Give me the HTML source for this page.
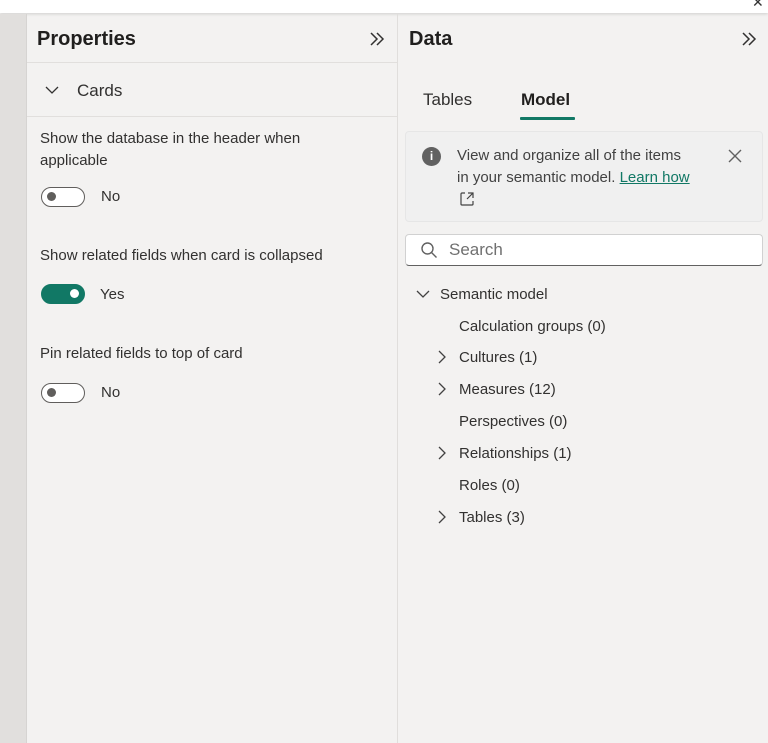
<!DOCTYPE html>
<html><head><style>
*{margin:0;padding:0;box-sizing:border-box}
body{width:768px;height:743px;overflow:hidden;background:#f3f2f1;font-family:"Liberation Sans",sans-serif;color:#252423;position:relative}
.a{position:absolute;white-space:nowrap}
.t{font-size:15px;color:#323130}
.tog{position:absolute;width:44px;height:20px;border-radius:10px;border:1.5px solid #605e5c;background:#fff}
.tog i{position:absolute;top:4px;left:5px;width:9px;height:9px;border-radius:50%;background:#605e5c}
.tog.on{background:#117865;border-color:#117865}
.tog.on i{left:auto;right:5px;background:#fff}
.tree{font-size:15px;color:#323130}
</style></head><body>
<div class="a" style="left:0;top:0;width:768px;height:13px;background:#fff;box-shadow:0 1px 3px rgba(0,0,0,.15)"></div>
<div class="a" style="left:752px;top:-6px;font-size:14px;color:#333">✕</div>
<div class="a" style="left:0;top:14px;width:26px;height:729px;background:#e1dfdd"></div>
<div class="a" style="left:26px;top:14px;width:1px;height:729px;background:#d6d4d2"></div>
<div class="a" style="left:397px;top:14px;width:1px;height:729px;background:#e0dedc"></div>

<div class="a" style="left:37px;top:28px;font-size:20px;font-weight:bold;color:#201f1e">Properties</div>
<svg class="a" style="left:368px;top:30px" width="18" height="18" viewBox="0 0 18 18" fill="none" stroke="#323130" stroke-width="1.5"><path d="M3 3l6 6-6 6M9 3l6 6-6 6"/></svg>
<div class="a" style="left:27px;top:62px;width:370px;height:1px;background:#e1dfdd"></div>
<svg class="a" style="left:45px;top:85px" width="14" height="10" viewBox="0 0 14 10" fill="none" stroke="#323130" stroke-width="1.3"><path d="M1 2l6 6 6-6"/></svg>
<div class="a" style="left:77px;top:81px;font-size:17px;color:#323130">Cards</div>
<div class="a" style="left:27px;top:116px;width:370px;height:1px;background:#e1dfdd"></div>

<div class="a t" style="left:40px;top:128px;line-height:22px;white-space:normal;width:300px">Show the database in the header when applicable</div>
<div class="tog" style="left:41px;top:187px"><i></i></div>
<div class="a t" style="left:101px;top:188px">No</div>
<div class="a t" style="left:40px;top:247px">Show related fields when card is collapsed</div>
<div class="tog on" style="left:41px;top:284px"><i></i></div>
<div class="a t" style="left:100px;top:286px">Yes</div>
<div class="a t" style="left:40px;top:345px">Pin related fields to top of card</div>
<div class="tog" style="left:41px;top:383px"><i></i></div>
<div class="a t" style="left:101px;top:384px">No</div>

<div class="a" style="left:409px;top:28px;font-size:20px;font-weight:bold;color:#201f1e">Data</div>
<svg class="a" style="left:740px;top:30px" width="18" height="18" viewBox="0 0 18 18" fill="none" stroke="#323130" stroke-width="1.5"><path d="M3 3l6 6-6 6M9 3l6 6-6 6"/></svg>
<div class="a" style="left:423px;top:90px;font-size:17px;color:#323130">Tables</div>
<div class="a" style="left:521px;top:90px;font-size:17px;font-weight:bold;color:#201f1e">Model</div>
<div class="a" style="left:520px;top:117px;width:55px;height:3px;background:#117865;border-radius:1px"></div>

<div class="a" style="left:405px;top:131px;width:358px;height:91px;background:#f0f0f0;border:1px solid #e6e6e6;border-radius:4px"></div>
<div class="a" style="left:422px;top:147px;width:19px;height:19px;border-radius:50%;background:#616161;color:#fff;font-size:12px;font-weight:bold;text-align:center;line-height:19px">i</div>
<div class="a" style="left:457px;top:145px;font-size:15px;line-height:22px;color:#424242">View and organize all of the items<br>in your semantic model. <span style="color:#117865;text-decoration:underline">Learn how</span></div>
<svg class="a" style="left:459px;top:191px" width="16" height="16" viewBox="0 0 16 16" fill="none" stroke="#424242" stroke-width="1.2"><path d="M6 2H3a1 1 0 0 0-1 1v10a1 1 0 0 0 1 1h10a1 1 0 0 0 1-1v-3M9 2h5v5M14 2L8 8"/></svg>
<svg class="a" style="left:727px;top:148px" width="16" height="16" viewBox="0 0 16 16" fill="none" stroke="#616161" stroke-width="1.4"><path d="M2 2l12 12M14 2L2 14"/></svg>

<div class="a" style="left:405px;top:234px;width:358px;height:32px;background:#fff;border:1px solid #d1d1d1;border-bottom:1.5px solid #616161;border-radius:4px"></div>
<svg class="a" style="left:420px;top:241px" width="18" height="18" viewBox="0 0 18 18" fill="none" stroke="#616161" stroke-width="1.4"><circle cx="7.5" cy="7.5" r="5.5"/><path d="M11.5 11.5l5 5"/></svg>
<div class="a" style="left:449px;top:240px;font-size:17px;color:#707070">Search</div>

<svg class="a" style="left:416px;top:289px" width="14" height="10" viewBox="0 0 14 10" fill="none" stroke="#424242" stroke-width="1.3"><path d="M1 2l6 6 6-6"/></svg>
<div class="a tree" style="left:440px;top:286px">Semantic model</div>
<div class="a tree" style="left:459px;top:318px">Calculation groups (0)</div>
<div class="a tree" style="left:459px;top:349px">Cultures (1)</div>
<div class="a tree" style="left:459px;top:381px">Measures (12)</div>
<div class="a tree" style="left:459px;top:413px">Perspectives (0)</div>
<div class="a tree" style="left:459px;top:445px">Relationships (1)</div>
<div class="a tree" style="left:459px;top:477px">Roles (0)</div>
<div class="a tree" style="left:459px;top:509px">Tables (3)</div>
<svg class="a" style="left:437px;top:349px" width="10" height="176" viewBox="0 0 10 176" fill="none" stroke="#424242" stroke-width="1.3"><path d="M2 2l6 6-6 6M2 34l6 6-6 6M2 98l6 6-6 6M2 162l6 6-6 6"/></svg>
</body></html>
